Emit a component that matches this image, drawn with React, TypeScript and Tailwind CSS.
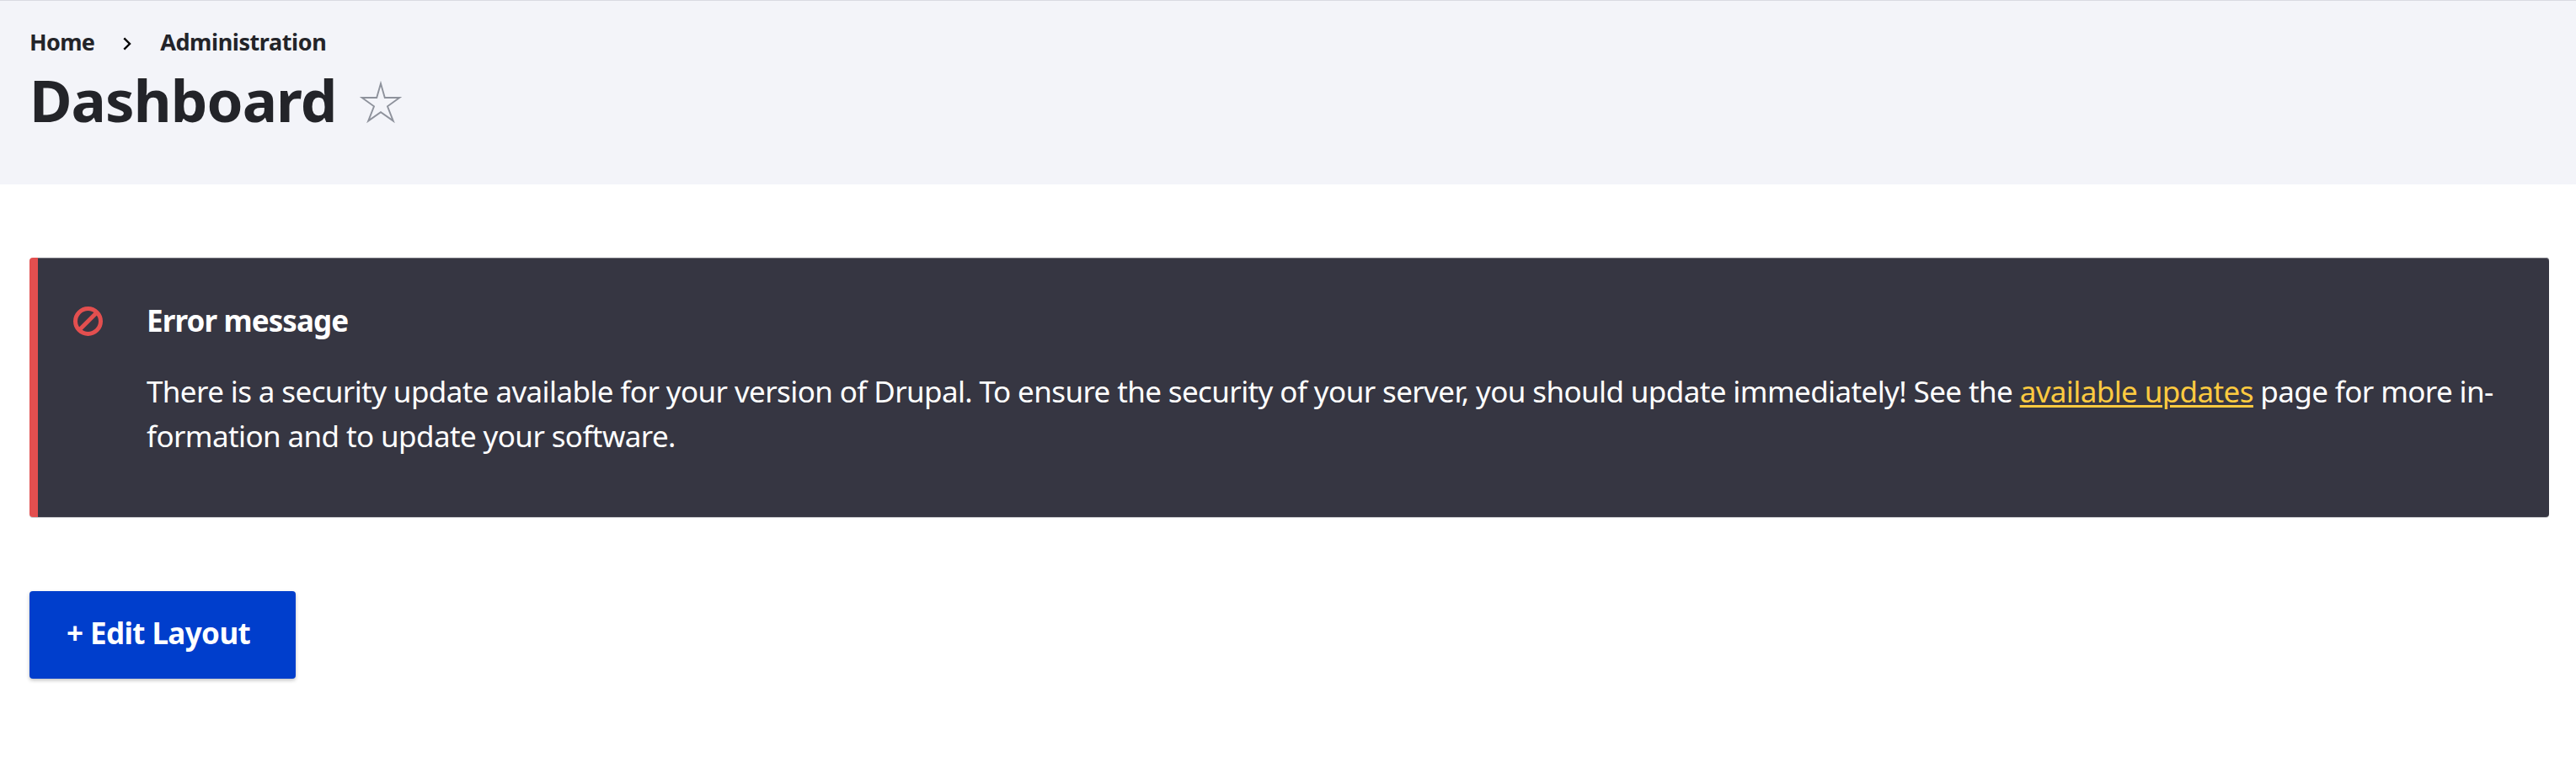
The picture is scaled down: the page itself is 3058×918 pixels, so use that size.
const breadcrumb = ['Home', 'Administration'];

function Breadcrumb() {
  return (
    <nav className="flex h-[40px] items-center text-[27px] font-bold text-[#232429]">
      <span className="tracking-[-0.7px]">{breadcrumb[0]}</span>
      <svg className="mx-[34px] mt-[3px] h-[16px] w-[10px]" viewBox="0 0 10 16" fill="none" stroke="#000" strokeWidth="2.4">
        <path d="M1.3 1.3 8 8 1.3 14.7" />
      </svg>
      <span className="tracking-[-0.42px]">{breadcrumb[1]}</span>
    </nav>
  );
}

function ErrorMessage() {
  return (
    <div className="mt-[87px] h-[308px] rounded-[4px] border-l-[10px] border-[#e34f4f] bg-[#363642] pt-[48px] pr-[60px] pl-[42px] text-white shadow-[inset_0_1px_0_#75757e,0_1px_0_#c6c6ca]">
      <div className="flex gap-[52px]">
        <svg className="mt-[10px] h-[35px] w-[35px] shrink-0" viewBox="0 0 35 35" fill="none" stroke="#e34f4f" strokeWidth="5">
          <circle cx="17.5" cy="17.5" r="15" />
          <path d="M7.5 27.5 27.5 7.5" />
        </svg>
        <div className="whitespace-nowrap">
          <h2 className="text-[35px] leading-[53px] font-bold tracking-[-0.9px]">Error message</h2>
          <p className="mt-[31px] text-[35px] leading-[53px] tracking-[-0.61px]">
            There is a security update available for your version of Drupal. To ensure the security of your server, you should update immediately! See the{' '}
            <a href="#" className="text-[#fdca40] underline decoration-[3px] underline-offset-[3px]">available updates</a> page for more in-<br />
            formation and to update your software.
          </p>
        </div>
      </div>
    </div>
  );
}

export default function App() {
  return (
    <div className="min-h-[918px] bg-white font-['Noto_Sans',sans-serif]">
      <header className="h-[219px] border-t border-[#d9dae2] bg-[#f3f4f9] px-[35px] pt-[29px]">
        <Breadcrumb />
        <div className="flex items-center gap-[27px]">
          <h1 className="text-[69px] leading-[96px] font-bold tracking-[-0.9px] text-[#232429]">Dashboard</h1>
          <svg className="mt-[6px] h-[52px] w-[52px]" viewBox="0 0 52 52" fill="none" stroke="#8e929c" strokeWidth="1.9">
            <path d="M26 4.2 30.8 21H48.3L34 31.3 40.8 48.6 26 38.2 11.2 48.6 18 31.3 3.7 21H21.2Z" />
          </svg>
        </div>
      </header>
      <main className="pr-[32px] pl-[35px]">
        <ErrorMessage />
        <button className="mt-[88px] block h-[104px] w-[316px] rounded-[4px] bg-[#003ecc] pb-[3px] pl-[44px] text-left text-[35px] font-bold tracking-[-0.6px] text-white shadow-[0_2px_4px_rgba(0,0,0,0.25)]">
          + Edit Layout
        </button>
      </main>
    </div>
  );
}
